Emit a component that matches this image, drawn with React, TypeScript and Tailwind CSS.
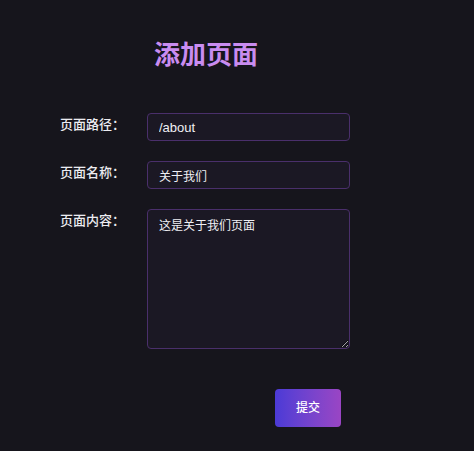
import React from "react";

const font = { fontFamily: '"Liberation Sans", "Noto Sans CJK SC", sans-serif' };

export default function App() {
  return (
    <div className="w-[474px] h-[451px] bg-[#16151c] text-[#ececf1] overflow-hidden" style={font}>
      <div className="pl-[60px] pt-[36px] w-[350px]">
        <h1 className="text-center text-[26px] leading-[38px] font-bold text-[#c98cf0] pl-[2px]">添加页面</h1>

        <form className="mt-[39px] flex flex-col gap-[20px]" onSubmit={(e) => e.preventDefault()}>
          <div className="flex">
            <label className="w-[87px] shrink-0 pt-[3px] text-[13px] leading-[18px] font-medium">页面路径：</label>
            <input
              defaultValue="/about"
              className="w-[203px] h-[28px] px-[11px] rounded-[4px] bg-[#1b1824] border border-[#4a2f6b] text-[13px] text-[#f0f0f4] outline-none"
              style={font}
            />
          </div>
          <div className="flex">
            <label className="w-[87px] shrink-0 pt-[3px] text-[13px] leading-[18px] font-medium">页面名称：</label>
            <input
              defaultValue="关于我们"
              className="w-[203px] h-[28px] px-[11px] rounded-[4px] bg-[#1b1824] border border-[#4a2f6b] text-[12px] text-[#f0f0f4] outline-none"
              style={font}
            />
          </div>
          <div className="flex">
            <label className="w-[87px] shrink-0 pt-[3px] text-[13px] leading-[18px] font-medium">页面内容：</label>
            <textarea
              defaultValue="这是关于我们页面"
              className="w-[203px] h-[140px] px-[11px] py-[7px] rounded-[4px] bg-[#1b1824] border border-[#4a2f6b] text-[12px] leading-[18px] text-[#f0f0f4] outline-none"
              style={font}
            />
          </div>
          <div className="flex pl-[215px] pt-[20px]">
            <button
              type="submit"
              className="w-[66px] h-[38px] rounded-[4px] bg-gradient-to-r from-[#4b3ad6] to-[#9a45c4] text-[12px] text-white font-medium"
            >
              提交
            </button>
          </div>
        </form>
      </div>
    </div>
  );
}
